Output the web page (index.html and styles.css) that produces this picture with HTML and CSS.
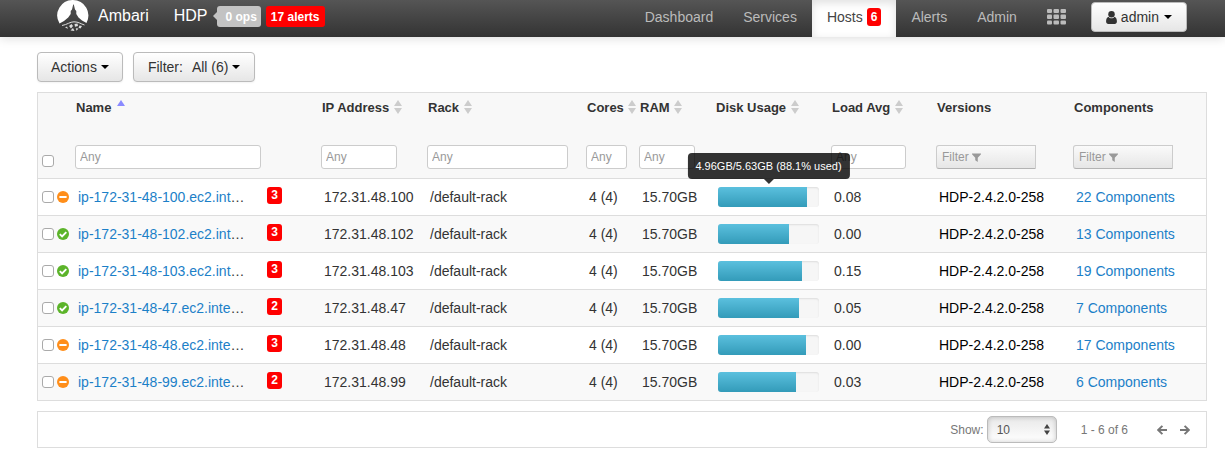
FILE: index.html
```html
<!DOCTYPE html>
<html lang="en">
<head>
    <meta charset="utf-8">
    <meta name="viewport" content="width=device-width, initial-scale=1">
    <title>Ambari - HDP</title>
    <link rel="stylesheet" href="styles.css">
</head>
<body>
    <!-- shared icons -->
    <svg class="icon-defs" aria-hidden="true">
        <symbol id="icon-ok" viewBox="0 0 12 12">
            <circle cx="6" cy="6" r="6" fill="#5cb42a"/>
            <path d="M2.8 6.2l2.3 2.3 4.2-4.3" fill="none" stroke="#fff" stroke-width="1.9"/>
        </symbol>
        <symbol id="icon-minus" viewBox="0 0 12 12">
            <circle cx="6" cy="6" r="6" fill="#ff8e1a"/>
            <rect x="2.4" y="5" width="7.2" height="2" fill="#fff"/>
        </symbol>
        <symbol id="icon-sort" viewBox="0 0 8 14">
            <path d="M4 0l4 6H0zM0 8h8l-4 6z" fill="#ccc"/>
        </symbol>
        <symbol id="icon-filter" viewBox="0 0 10 10">
            <path d="M0 0.5h10v1L6.4 5.2V10L3.6 8V5.2L0 1.5z" fill="currentColor"/>
        </symbol>
        <symbol id="icon-arrow" viewBox="0 0 10 10">
            <path d="M0 5h8.4M4.6 0.9L8.8 5 4.6 9.1" fill="none" stroke="currentColor" stroke-width="2"/>
        </symbol>
    </svg>

    <header class="navbar">
        <a class="brand" href="#">
            <svg class="logo" viewBox="0 0 32 32" aria-hidden="true">
                <path d="M16 0a15.500 15.500 0 0 1 13.500 23L25 20.500l-3.500-3-2.200-3.500v-3l-1.300-1.500L16.800 4.500h-.6L15 9.500 13.700 11v3l-2.500 3.500L7 21l-4.500 2.500A15.500 15.500 0 0 1 16 0z" fill="#fff"/>
                <path d="M5 25.500c5-.8 8-3.700 12-3.700 4.500 0 6.500 2 10.500 3.200" fill="none" stroke="#ddd" stroke-width="1"/>
                <path d="M12 26l2.500-2 1.500 2-2 2.500zM17.500 24l3-.5.500 2.500-3 .8zM22.500 25.500l2.500.5-1.500 2.500-2-.8zM8 27.500l2-1 1 2.300zM13.500 30.500l2.500-2.500 1.500 3zM18.800 28.200l2.700.3-2 2.300z" fill="#ddd"/>
            </svg>
            Ambari
        </a>
        <a class="cluster" href="#">HDP</a>
        <a class="ops" href="#">0 ops</a>
        <a class="label alerts" href="#">17 alerts</a>
        <nav class="menu">
            <a href="#">Dashboard</a>
            <a href="#">Services</a>
            <a class="active" href="#">Hosts <span class="label">6</span></a>
            <a href="#">Alerts</a>
            <a href="#">Admin</a>
            <a href="#" aria-label="Views">
                <svg width="19" height="16" viewBox="0 0 19 16" fill="#bbb" aria-hidden="true">
                    <rect width="5" height="4" rx="1"/><rect x="6.500" width="5.500" height="4" rx="1"/><rect x="13.500" width="5.500" height="4" rx="1"/>
                    <rect y="5.500" width="5" height="4.500" rx="1"/><rect x="6.500" y="5.500" width="5.500" height="4.500" rx="1"/><rect x="13.500" y="5.500" width="5.500" height="4.500" rx="1"/>
                    <rect y="11.500" width="5" height="4" rx="1"/><rect x="6.500" y="11.500" width="5.500" height="4" rx="1"/><rect x="13.500" y="11.500" width="5.500" height="4" rx="1"/>
                </svg>
            </a>
        </nav>
        <button class="btn user" type="button">
            <svg width="11" height="13" viewBox="0 0 10 12" fill="#333" aria-hidden="true">
                <circle cx="5" cy="3.1" r="3"/>
                <path d="M2.2 5.2C.6 5.8 0 7.500 0 9.800 0 11.300.9 12 2 12h6c1.100 0 2-.7 2-2.200 0-2.300-.6-4-2.200-4.600C7 6.200 6 6.700 5 6.700s-2-.5-2.800-1.500z"/>
            </svg>
            admin <span class="caret"></span>
        </button>
    </header>

    <main class="content">
        <div class="toolbar">
            <button class="btn" type="button">Actions <span class="caret"></span></button>
            <button class="btn" type="button"><span class="filter-name">Filter:</span>All (6) <span class="caret"></span></button>
        </div>

        <table class="hosts">
            <colgroup>
                <col class="col-check">
                <col class="col-name">
                <col class="col-alerts">
                <col class="col-ip">
                <col class="col-rack">
                <col class="col-cores">
                <col class="col-ram">
                <col class="col-disk">
                <col class="col-load">
                <col class="col-versions">
                <col>
            </colgroup>
            <thead>
                <tr class="titles">
                    <th></th>
                    <th colspan="2">Name <span class="sort-up"></span></th>
                    <th>IP Address <svg class="sort"><use href="#icon-sort"/></svg></th>
                    <th>Rack <svg class="sort"><use href="#icon-sort"/></svg></th>
                    <th>Cores <svg class="sort"><use href="#icon-sort"/></svg></th>
                    <th>RAM <svg class="sort"><use href="#icon-sort"/></svg></th>
                    <th>Disk Usage <svg class="sort"><use href="#icon-sort"/></svg></th>
                    <th>Load Avg <svg class="sort"><use href="#icon-sort"/></svg></th>
                    <th>Versions</th>
                    <th>Components</th>
                </tr>
                <tr class="filters">
                    <td class="check-all"><input type="checkbox" aria-label="Select all hosts"></td>
                    <td><input type="text" placeholder="Any" aria-label="Name"></td>
                    <td></td>
                    <td><input class="w-ip" type="text" placeholder="Any" aria-label="IP Address"></td>
                    <td><input class="w-rack" type="text" placeholder="Any" aria-label="Rack"></td>
                    <td><input class="w-cores" type="text" placeholder="Any" aria-label="Cores"></td>
                    <td><input class="w-ram" type="text" placeholder="Any" aria-label="RAM"></td>
                    <td></td>
                    <td><input class="w-load" type="text" placeholder="Any" aria-label="Load Avg"></td>
                    <td><button class="filter-btn" type="button">Filter <svg><use href="#icon-filter"/></svg></button></td>
                    <td><button class="filter-btn" type="button">Filter <svg><use href="#icon-filter"/></svg></button></td>
                </tr>
            </thead>
            <tbody>
                <tr>
                    <td class="status"><input type="checkbox" aria-label="Select ip-172-31-48-100"><svg><use href="#icon-minus"/></svg></td>
                    <td class="name"><a href="#">ip-172-31-48-100.ec2.int</a>…</td>
                    <td class="count"><a class="label" href="#">3</a></td>
                    <td>172.31.48.100</td>
                    <td>/default-rack</td>
                    <td>4 (4)</td>
                    <td>15.70GB</td>
                    <td>
                        <div class="progress">
                            <div class="bar" style="width: 88%"></div>
                            <div class="tooltip" role="tooltip">4.96GB/5.63GB (88.1% used)</div>
                        </div>
                    </td>
                    <td>0.08</td>
                    <td class="version">HDP-2.4.2.0-258</td>
                    <td><a href="#">22 Components</a></td>
                </tr>
                <tr>
                    <td class="status"><input type="checkbox" aria-label="Select ip-172-31-48-102"><svg><use href="#icon-ok"/></svg></td>
                    <td class="name"><a href="#">ip-172-31-48-102.ec2.int</a>…</td>
                    <td class="count"><a class="label" href="#">3</a></td>
                    <td>172.31.48.102</td>
                    <td>/default-rack</td>
                    <td>4 (4)</td>
                    <td>15.70GB</td>
                    <td><div class="progress"><div class="bar" style="width: 70%"></div></div></td>
                    <td>0.00</td>
                    <td class="version">HDP-2.4.2.0-258</td>
                    <td><a href="#">13 Components</a></td>
                </tr>
                <tr>
                    <td class="status"><input type="checkbox" aria-label="Select ip-172-31-48-103"><svg><use href="#icon-ok"/></svg></td>
                    <td class="name"><a href="#">ip-172-31-48-103.ec2.int</a>…</td>
                    <td class="count"><a class="label" href="#">3</a></td>
                    <td>172.31.48.103</td>
                    <td>/default-rack</td>
                    <td>4 (4)</td>
                    <td>15.70GB</td>
                    <td><div class="progress"><div class="bar" style="width: 83%"></div></div></td>
                    <td>0.15</td>
                    <td class="version">HDP-2.4.2.0-258</td>
                    <td><a href="#">19 Components</a></td>
                </tr>
                <tr>
                    <td class="status"><input type="checkbox" aria-label="Select ip-172-31-48-47"><svg><use href="#icon-ok"/></svg></td>
                    <td class="name"><a href="#">ip-172-31-48-47.ec2.inte</a>…</td>
                    <td class="count"><a class="label" href="#">2</a></td>
                    <td>172.31.48.47</td>
                    <td>/default-rack</td>
                    <td>4 (4)</td>
                    <td>15.70GB</td>
                    <td><div class="progress"><div class="bar" style="width: 80%"></div></div></td>
                    <td>0.05</td>
                    <td class="version">HDP-2.4.2.0-258</td>
                    <td><a href="#">7 Components</a></td>
                </tr>
                <tr>
                    <td class="status"><input type="checkbox" aria-label="Select ip-172-31-48-48"><svg><use href="#icon-minus"/></svg></td>
                    <td class="name"><a href="#">ip-172-31-48-48.ec2.inte</a>…</td>
                    <td class="count"><a class="label" href="#">3</a></td>
                    <td>172.31.48.48</td>
                    <td>/default-rack</td>
                    <td>4 (4)</td>
                    <td>15.70GB</td>
                    <td><div class="progress"><div class="bar" style="width: 87%"></div></div></td>
                    <td>0.00</td>
                    <td class="version">HDP-2.4.2.0-258</td>
                    <td><a href="#">17 Components</a></td>
                </tr>
                <tr>
                    <td class="status"><input type="checkbox" aria-label="Select ip-172-31-48-99"><svg><use href="#icon-minus"/></svg></td>
                    <td class="name"><a href="#">ip-172-31-48-99.ec2.inte</a>…</td>
                    <td class="count"><a class="label" href="#">2</a></td>
                    <td>172.31.48.99</td>
                    <td>/default-rack</td>
                    <td>4 (4)</td>
                    <td>15.70GB</td>
                    <td><div class="progress"><div class="bar" style="width: 77%"></div></div></td>
                    <td>0.03</td>
                    <td class="version">HDP-2.4.2.0-258</td>
                    <td><a href="#">6 Components</a></td>
                </tr>
            </tbody>
        </table>

        <div class="paging">
            <label for="pageSize">Show:</label>
            <div class="select-wrap">
                <select id="pageSize">
                    <option selected>10</option>
                    <option>25</option>
                    <option>50</option>
                </select>
                <svg class="stepper" width="6" height="11" viewBox="0 0 6 11" aria-hidden="true"><path d="M3 0l3 4.500H0zM0 6.500h6L3 11z" fill="#444"/></svg>
            </div>
            <span class="range">1 - 6 of 6</span>
            <a class="page prev" href="#" aria-label="Previous"><svg><use href="#icon-arrow"/></svg></a>
            <a class="page" href="#" aria-label="Next"><svg><use href="#icon-arrow"/></svg></a>
        </div>
    </main>
</body>
</html>
```
FILE: styles.css
```css
* {
    box-sizing: border-box;
}

body {
    margin: 0;
    font-family: "Liberation Sans", Helvetica, Arial, sans-serif;
    font-size: 14px;
    line-height: 20px;
    color: #333;
    background-color: #fff;
}

a {
    color: #1c80c8;
    text-decoration: none;
}

input, button, select {
    font-family: inherit;
    margin: 0;
}

.icon-defs {
    display: none;
}

/* top bar */
.navbar {
    display: flex;
    align-items: flex-start;
    height: 37px;
    padding: 0 38px 0 57px;
    background-image: linear-gradient(#555, #333);
    box-shadow: 0 1px 10px rgba(0, 0, 0, 0.15);
}

.brand, .cluster {
    display: flex;
    align-items: center;
    height: 32px;
    font-size: 16px;
    color: #fff;
}

.brand {
    gap: 9px;
    margin-right: 25px;
}

.logo {
    width: 32px;
    height: 32px;
}

.cluster {
    margin-right: 10px;
}

.label, .ops {
    background-color: #f00;
    border-radius: 3px;
    color: #fff;
    font-size: 12px;
    font-weight: bold;
}

.ops, .alerts {
    height: 21px;
    margin-top: 6px;
    padding: 0 5px;
    line-height: 22px;
}

.ops {
    position: relative;
    margin-right: 5px;
    padding: 0 4px 0 8px;
    background-color: #c3c3c3;
}

.ops::before {
    content: "";
    position: absolute;
    left: -4px;
    top: 5px;
    border: 5px solid transparent;
    border-left: 0;
    border-right-color: #c3c3c3;
}

.menu {
    display: flex;
    margin-left: auto;
    height: 37px;
}

.menu a {
    display: flex;
    align-items: center;
    padding: 0 15px 3px;
    color: #bbb;
}

.menu .active {
    gap: 4px;
    background-color: #fff;
    color: #444;
    box-shadow: inset 0 3px 8px rgba(0, 0, 0, 0.125);
}

.menu .label {
    height: 18px;
    padding: 0 4px;
    line-height: 18px;
}

.btn {
    display: flex;
    align-items: center;
    height: 30px;
    padding: 0 13px;
    border: 1px solid #bbb;
    border-radius: 4px;
    background-image: linear-gradient(#fff, #e6e6e6);
    box-shadow: 0 1px 2px rgba(0, 0, 0, 0.05);
    color: #333;
    font-size: 14px;
    cursor: pointer;
}

.btn.user {
    gap: 4px;
    margin: 2px 0 0 10px;
    padding: 0 14px;
}

.user .caret {
    margin-left: 1px;
}

.caret {
    margin-left: 4px;
    border: 4px solid transparent;
    border-top-color: #000;
    border-bottom: 0;
}

/* hosts list */
.content {
    padding: 15px 18px 0 37px;
}

.toolbar {
    display: flex;
    gap: 10px;
    margin-bottom: 10px;
}

.filter-name {
    margin-right: 9px;
}

.toolbar .btn:last-child {
    padding: 0 14px;
}

.hosts {
    width: 100%;
    table-layout: fixed;
    border: 1px solid #ddd;
    border-collapse: separate;
    border-spacing: 0;
}

.col-check { width: 34px; }
.col-name { width: 192px; }
.col-alerts { width: 54px; }
.col-ip { width: 106px; }
.col-rack { width: 159px; }
.col-cores { width: 53px; }
.col-ram { width: 76px; }
.col-disk { width: 116px; }
.col-load { width: 105px; }
.col-versions { width: 137px; }

.hosts th, .hosts td {
    padding: 0;
    text-align: left;
    white-space: nowrap;
}

.hosts thead {
    background-color: #f8f8f8;
}

.hosts .titles th {
    height: 48px;
    padding: 5px 0 0 4px;
    vertical-align: top;
    font-size: 13px;
}

.sort {
    width: 8px;
    height: 14px;
    margin-left: 1px;
    vertical-align: -2px;
}

.sort-up {
    display: inline-block;
    margin-left: 2px;
    border: 4px solid transparent;
    border-bottom: 6px solid #8a8aff;
    border-top: 0;
    vertical-align: 6px;
}

.hosts .filters td {
    height: 37px;
    padding: 4px 0 0 3px;
    vertical-align: top;
}

.hosts .filters .check-all {
    padding: 14px 0 0 4px;
    line-height: 0;
}

input[type="text"] {
    display: block;
    width: 186px;
    height: 24px;
    padding: 0 4px;
    border: 1px solid #ccc;
    border-radius: 3px;
    background-color: #fff;
    font-size: 12px;
}

input[type="text"]::placeholder {
    color: #999;
}

input.w-ip { width: 76px; }
input.w-rack { width: 141px; }
input.w-cores { width: 41px; }
input.w-ram { width: 56px; }
input.w-load { width: 75px; }

input[type="checkbox"] {
    appearance: none;
    width: 12px;
    height: 12px;
    border: 1px solid #aaa;
    border-radius: 3px;
    background-color: #fff;
}

.filter-btn {
    display: flex;
    align-items: center;
    gap: 3px;
    width: 100px;
    height: 24px;
    padding: 0 5px;
    border: 1px solid #ccc;
    border-bottom-color: #b3b3b3;
    border-radius: 3px 0 0 3px;
    background-image: linear-gradient(#fafafa, #e6e6e6);
    color: #999;
    font-size: 12px;
}

.filter-btn svg {
    width: 9px;
    height: 9px;
}

.hosts tbody td {
    height: 37px;
    padding-left: 6px;
    border-top: 1px solid #ddd;
}

.hosts tbody tr:nth-child(even) {
    background-color: #f9f9f9;
}

.hosts tbody .status {
    padding-left: 4px;
    line-height: 0;
}

.status svg {
    width: 12px;
    height: 12px;
    margin-left: 3px;
}

.hosts tbody .count {
    padding: 8px 0 0 3px;
    vertical-align: top;
}

.count .label {
    display: block;
    width: 15px;
    height: 17px;
    line-height: 17px;
    text-align: center;
}

.version {
    color: #000;
}

.progress {
    position: relative;
    width: 101px;
    height: 20px;
    border-radius: 3px;
    background-color: #f6f6f6;
    box-shadow: inset 0 1px 2px rgba(0, 0, 0, 0.1);
}

.bar {
    height: 20px;
    border-radius: 3px 0 0 3px;
    background-image: linear-gradient(#5bc0de, #339bb9);
}

.tooltip {
    position: absolute;
    left: 50%;
    bottom: 28px;
    height: 26px;
    padding: 0 8px;
    transform: translateX(-50%);
    border-radius: 4px;
    background-color: rgba(0, 0, 0, 0.8);
    color: #fff;
    font-size: 11px;
    line-height: 26px;
}

.tooltip::after {
    content: "";
    position: absolute;
    left: 50%;
    top: 100%;
    margin-left: -5px;
    border: 5px solid transparent;
    border-top-color: rgba(0, 0, 0, 0.8);
    border-bottom: 0;
}

/* paging */
.paging {
    display: flex;
    align-items: center;
    justify-content: flex-end;
    height: 37px;
    margin-top: 10px;
    padding-right: 16px;
    border: 1px solid #ddd;
    color: #777;
    font-size: 12px;
}

.select-wrap {
    position: relative;
    margin: 0 24px 0 3px;
}

.select-wrap select {
    display: block;
    appearance: none;
    width: 70px;
    height: 27px;
    padding: 0 9px;
    border: 1px solid #bbb;
    border-radius: 5px;
    background-image: linear-gradient(#e8e8e8, #fff);
    box-shadow: inset 0 0 5px rgba(0, 0, 0, 0.2);
    color: #555;
    font-size: 12px;
}

.stepper {
    position: absolute;
    right: 7px;
    top: 8px;
}

.range {
    margin-right: 29px;
}

.page {
    display: flex;
    color: #777;
}

.page svg {
    width: 10px;
    height: 10px;
}

.prev {
    margin-right: 13px;
    transform: rotate(180deg);
}
```
